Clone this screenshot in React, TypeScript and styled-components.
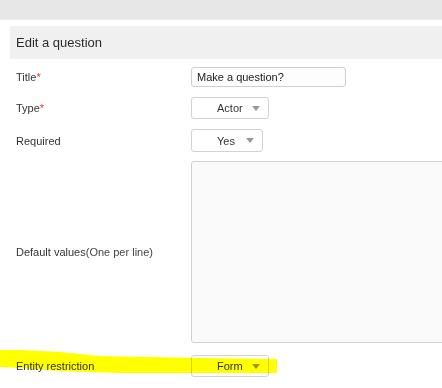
import styled, { createGlobalStyle } from "styled-components";

const GlobalStyle = createGlobalStyle`
  html, body {
    margin: 0;
    padding: 0;
    background: #fff;
    overflow: hidden;
  }
  body {
    font-family: "Liberation Sans", Arial, sans-serif;
    color: #333;
  }
`;

const Page = styled.div`
  position: relative;
  width: 442px;
  height: 388px;
  overflow: hidden;
`;

const TopBar = styled.div`
  height: 19px;
  background: #e7e7e7;
  border-bottom: 1px solid #eeeeee;
`;

const Panel = styled.div`
  margin: 6px 0 0 10px;
`;

const PanelHeader = styled.div`
  height: 33px;
  background: #f0f0f0;
  display: flex;
  align-items: center;
  padding-left: 6px;
  font-size: 13px;
  color: #2b2b2b;
`;

const Form = styled.div`
  display: grid;
  grid-template-columns: 175px 1fr;
  align-items: center;
  padding: 8px 0 0 6px;
`;

const Label = styled.div<{ gap: number }>`
  font-size: 11px;
  color: #333;
  margin-bottom: ${({ gap }) => gap}px;
`;

const Required = styled.span`
  color: #e03a3a;
`;

const Hint = styled.span`
  color: #444;
`;

const Field = styled.div<{ gap: number }>`
  margin-bottom: ${({ gap }) => gap}px;
  display: flex;
`;

const TextInput = styled.div`
  box-sizing: border-box;
  width: 155px;
  height: 20px;
  border: 1px solid #cfcfcf;
  border-radius: 3px;
  background: #fdfdfd;
  font-size: 11px;
  color: #222;
  padding-left: 5px;
  display: flex;
  align-items: center;
`;

const Select = styled.div<{ width: number; height: number }>`
  box-sizing: border-box;
  width: ${({ width }) => width}px;
  height: ${({ height }) => height}px;
  border: 1px solid #d2d2d2;
  border-radius: 3px;
  background: #fff;
  display: flex;
  align-items: center;
  justify-content: space-between;
  padding: 0 8px 0 25px;
  font-size: 11px;
  color: #333;
`;

const Caret = styled.span`
  width: 0;
  height: 0;
  border-left: 4px solid transparent;
  border-right: 4px solid transparent;
  border-top: 5px solid #9a9a9a;
`;

const TextArea = styled.div`
  box-sizing: border-box;
  width: 300px;
  height: 182px;
  border: 1px solid #d0d0d0;
  border-radius: 3px;
  background: #fafafa;
`;

const Highlight = styled.svg`
  position: absolute;
  left: 0;
  top: 0;
  pointer-events: none;
  mix-blend-mode: multiply;
`;

export default function App() {
  return (
    <Page>
      <GlobalStyle />
      <TopBar />
      <Panel>
        <PanelHeader>Edit a question</PanelHeader>
        <Form>
          <Label gap={10}>
            Title<Required>*</Required>
          </Label>
          <Field gap={10}>
            <TextInput>Make a question?</TextInput>
          </Field>

          <Label gap={10}>
            Type<Required>*</Required>
          </Label>
          <Field gap={10}>
            <Select width={78} height={22}>
              Actor
              <Caret />
            </Select>
          </Field>

          <Label gap={9}>Required</Label>
          <Field gap={9}>
            <Select width={72} height={23}>
              Yes
              <Caret />
            </Select>
          </Field>

          <Label gap={12}>
            Default values<Hint>(One per line)</Hint>
          </Label>
          <Field gap={12}>
            <TextArea />
          </Field>

          <Label gap={0}>Entity restriction</Label>
          <Field gap={0}>
            <Select width={78} height={22}>
              Form
              <Caret />
            </Select>
          </Field>
        </Form>
      </Panel>
      <Highlight width="442" height="388">
        <polygon
          points="0,350 22,350 60,352 100,356 200,358 277,359 277,373 120,373 60,371 20,368 0,367"
          fill="#ffff00"
        />
      </Highlight>
    </Page>
  );
}
